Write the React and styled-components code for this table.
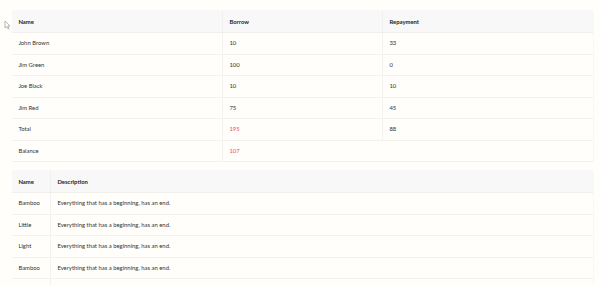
import React from "react";
import styled, { createGlobalStyle } from "styled-components";

const Global = createGlobalStyle`
  html, body { margin: 0; padding: 0; background: #fffefb; }
  body { font-family: Lato, "Liberation Sans", sans-serif; color: #2a2a2a; }
`;

const Page = styled.div`
  position: relative;
  display: flex;
  flex-direction: column;
  gap: 8px;
  padding: 10px 7px 0 12px;
  width: 600px;
  height: 285px;
  box-sizing: border-box;
  overflow: hidden;
`;

const Cursor = styled.svg`
  position: absolute;
  left: 4px;
  top: 20px;
`;

const Table = styled.table`
  width: 100%;
  border-collapse: separate;
  border-spacing: 0;
  table-layout: fixed;
  font-size: 5.9px;
  background: #fffefb;
  border-radius: 3px 3px 0 0;
  box-shadow: 1px 0 1px rgba(0, 0, 0, 0.03);
`;

const HeadCell = styled.th`
  height: 23px;
  padding: 0 6.4px;
  box-sizing: border-box;
  text-align: left;
  font-weight: 700;
  color: #1f1f1f;
  background: #f8f8f8;
  border-bottom: 1px solid #f0efec;
  border-right: ${(p) => (p.$last ? "none" : "1px solid #f1f0ed")};
  &:first-child { border-top-left-radius: 3px; }
  &:last-child { border-top-right-radius: 3px; }
`;

const Cell = styled.td`
  height: 21.5px;
  padding: 0 6.4px;
  box-sizing: border-box;
  color: ${(p) => (p.$danger ? "#ee4d5e" : "#333")};
  border-bottom: 1px solid #f3f2ee;
  border-right: ${(p) => (p.$last ? "none" : "1px solid #f3f2ee")};
  line-height: 8px;
`;

const data = [
  ["John Brown", 10, 33],
  ["Jim Green", 100, 0],
  ["Joe Black", 10, 10],
  ["Jim Red", 75, 45],
];

const desc = ["Bamboo", "Little", "Light", "Bamboo"];

export default function App() {
  return (
    <>
      <Global />
      <Page>
        <Cursor width="7" height="10" viewBox="0 0 7 10">
          <path d="M1 1 L1 8 L2.8 6.4 L4 9 L5 8.6 L3.9 6 L6 6 Z" fill="#fff" stroke="#9a9a9a" strokeWidth="0.7" strokeLinejoin="round" />
        </Cursor>
        <Table>
          <colgroup>
            <col style={{ width: 211 }} />
            <col style={{ width: 160 }} />
            <col />
          </colgroup>
          <thead>
            <tr>
              <HeadCell>Name</HeadCell>
              <HeadCell>Borrow</HeadCell>
              <HeadCell $last>Repayment</HeadCell>
            </tr>
          </thead>
          <tbody>
            {data.map(([n, b, r]) => (
              <tr key={n}>
                <Cell>{n}</Cell>
                <Cell>{b}</Cell>
                <Cell $last>{r}</Cell>
              </tr>
            ))}
            <tr>
              <Cell>Total</Cell>
              <Cell $danger>195</Cell>
              <Cell $last>88</Cell>
            </tr>
            <tr>
              <Cell>Balance</Cell>
              <Cell $danger $last colSpan={2}>107</Cell>
            </tr>
          </tbody>
        </Table>
        <Table>
          <colgroup>
            <col style={{ width: 39 }} />
            <col />
          </colgroup>
          <thead>
            <tr>
              <HeadCell>Name</HeadCell>
              <HeadCell $last>Description</HeadCell>
            </tr>
          </thead>
          <tbody>
            {desc.map((n, i) => (
              <tr key={i}>
                <Cell>{n}</Cell>
                <Cell $last>Everything that has a beginning, has an end.</Cell>
              </tr>
            ))}
            <tr>
              <Cell />
              <Cell $last />
            </tr>
          </tbody>
        </Table>
      </Page>
    </>
  );
}
